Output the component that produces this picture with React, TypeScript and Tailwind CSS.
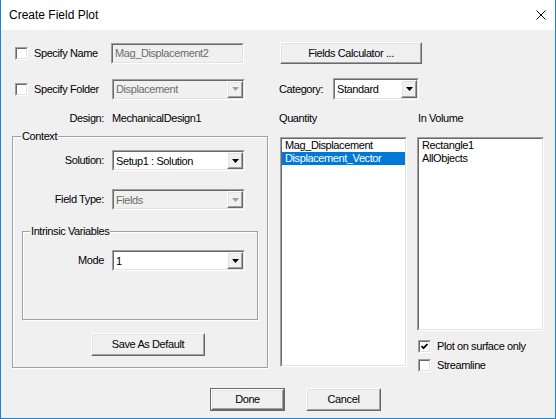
import React from "react";

function Sunken({ className = "", inner = "", children }: { className?: string; inner?: string; children?: React.ReactNode }) {
  return (
    <div className={`border border-t-[#a0a0a0] border-l-[#a0a0a0] border-r-white border-b-white ${className}`}>
      <div className={`h-full border border-t-[#696969] border-l-[#696969] border-r-[#e3e3e3] border-b-[#e3e3e3] ${inner}`}>
        {children}
      </div>
    </div>
  );
}

function Raised({ className = "", children }: { className?: string; children?: React.ReactNode }) {
  return (
    <div className={`border border-t-white border-l-white border-r-[#696969] border-b-[#696969] ${className}`}>
      <div className="h-full border border-t-[#e3e3e3] border-l-[#e3e3e3] border-r-[#a0a0a0] border-b-[#a0a0a0] bg-[#f0f0f0] flex items-center justify-center">
        {children}
      </div>
    </div>
  );
}

function Arrow({ disabled }: { disabled?: boolean }) {
  return (
    <svg width="7" height="4" viewBox="0 0 7 4">
      <polygon points="0,0 7,0 3.5,4" fill={disabled ? "#a0a0a0" : "#000"} />
    </svg>
  );
}

function Combo({ value, disabled, className = "" }: { value: string; disabled?: boolean; className?: string }) {
  return (
    <Sunken className={className} inner={`flex ${disabled ? "bg-[#f0f0f0]" : "bg-white"}`}>
      <div className={`flex-1 pl-[2px] flex items-center leading-[14px] ${disabled ? "text-[#6d6d6d]" : "text-black"}`}>
        {value}
      </div>
      <Raised className="w-[16px] h-full">
        <Arrow disabled={disabled} />
      </Raised>
    </Sunken>
  );
}

function Check({ label, checked }: { label: string; checked?: boolean }) {
  return (
    <div className="flex items-center gap-[6px]">
      <Sunken className="w-[13px] h-[13px]" inner="bg-white flex items-center justify-center">
        {checked && (
          <svg width="7" height="7" viewBox="0 0 7 7">
            <path d="M0.5 3 L2.5 5.2 L6.5 1" stroke="#000" strokeWidth="1.8" fill="none" />
          </svg>
        )}
      </Sunken>
      <span className="leading-[14px]">{label}</span>
    </div>
  );
}

export default function App() {
  return (
    <div className="w-[556px] h-[419px] bg-[#f0f0f0] border-x border-b border-[#1883d7] font-['Liberation_Sans',Arial,sans-serif] text-[11px] tracking-[-0.4px] text-black flex flex-col">
      {/* Title bar */}
      <div className="h-[30px] bg-white flex items-center justify-between pl-[8px] pr-[9px]">
        <span className="text-[12px] tracking-normal">Create Field Plot</span>
        <svg width="10" height="10" viewBox="0 0 10 10">
          <path d="M0.5 0.5 L9.5 9.5 M9.5 0.5 L0.5 9.5" stroke="#000" strokeWidth="1" />
        </svg>
      </div>

      {/* Row 1 */}
      <div className="mt-[12px] h-[22px] flex items-center">
        <div className="w-[110px] pl-[14px]">
          <Check label="Specify Name" />
        </div>
        <Sunken className="w-[133px] h-[21px]" inner="bg-[#f0f0f0] flex items-center pl-[2px] text-[#6d6d6d]">
          Mag_Displacement2
        </Sunken>
        <Raised className="ml-[36px] w-[142px] h-[22px]">Fields Calculator ...</Raised>
      </div>

      {/* Row 2 */}
      <div className="mt-[14px] h-[22px] flex items-center">
        <div className="w-[111px] pl-[14px]">
          <Check label="Specify Folder" />
        </div>
        <Combo className="w-[133px] h-[21px]" value="Displacement" disabled />
        <span className="ml-[34px] w-[54px]">Category:</span>
        <Combo className="w-[86px] h-[22px]" value="Standard" />
      </div>

      {/* Row 3 */}
      <div className="mt-[11px] h-[14px] flex items-center leading-[14px]">
        <span className="w-[103px] text-right">Design:</span>
        <span className="ml-[8px] w-[167px]">MechanicalDesign1</span>
        <span className="w-[139px]">Quantity</span>
        <span>In Volume</span>
      </div>

      {/* Main */}
      <div className="mt-[4px] flex items-start">
        <fieldset className="ml-[11px] w-[256px] h-[239px] border border-[#a0a0a0] shadow-[inset_1px_1px_0_#fff,1px_1px_0_#fff]">
          <legend className="ml-[8px] px-px leading-[14px] bg-[#f0f0f0]">Context</legend>
          <div className="mt-[7px] h-[21px] flex items-center">
            <span className="w-[91px] text-right">Solution:</span>
            <Combo className="ml-[8px] w-[133px] h-[21px]" value="Setup1 : Solution" />
          </div>
          <div className="mt-[18px] h-[21px] flex items-center">
            <span className="w-[91px] text-right">Field Type:</span>
            <Combo className="ml-[8px] w-[133px] h-[21px]" value="Fields" disabled />
          </div>
          <fieldset className="mt-[14px] ml-[9px] w-[236px] h-[96px] border border-[#a0a0a0] shadow-[inset_1px_1px_0_#fff,1px_1px_0_#fff]">
            <legend className="ml-[7px] px-px leading-[14px] bg-[#f0f0f0]">Intrinsic Variables</legend>
            <div className="mt-[12px] h-[21px] flex items-center">
              <span className="w-[81px] text-right">Mode</span>
              <Combo className="ml-[8px] w-[133px] h-[21px]" value="1" />
            </div>
          </fieldset>
          <Raised className="mt-[13px] ml-[78px] w-[114px] h-[23px]">Save As Default</Raised>
        </fieldset>

        <Sunken className="ml-[12px] mt-[8px] w-[127px] h-[230px]" inner="bg-white leading-[13px]">
          <div className="pl-[3px]">Mag_Displacement</div>
          <div className="pl-[3px] bg-[#0078d7] text-white">Displacement_Vector</div>
        </Sunken>

        <div className="ml-[10px] mt-[8px] w-[127px] flex flex-col">
          <Sunken className="h-[194px]" inner="bg-white leading-[13px]">
            <div className="pl-[3px]">Rectangle1</div>
            <div className="pl-[3px]">AllObjects</div>
          </Sunken>
          <div className="mt-[8px] pl-px">
            <Check label="Plot on surface only" checked />
          </div>
          <div className="mt-[5px] pl-px">
            <Check label="Streamline" />
          </div>
        </div>
      </div>

      {/* Bottom buttons */}
      <div className="mt-[16px] flex">
        <div className="ml-[209px] w-[75px] h-[23px] border border-[#696969]">
          <Raised className="h-full">Done</Raised>
        </div>
        <Raised className="ml-[21px] w-[75px] h-[23px]">Cancel</Raised>
      </div>
    </div>
  );
}
